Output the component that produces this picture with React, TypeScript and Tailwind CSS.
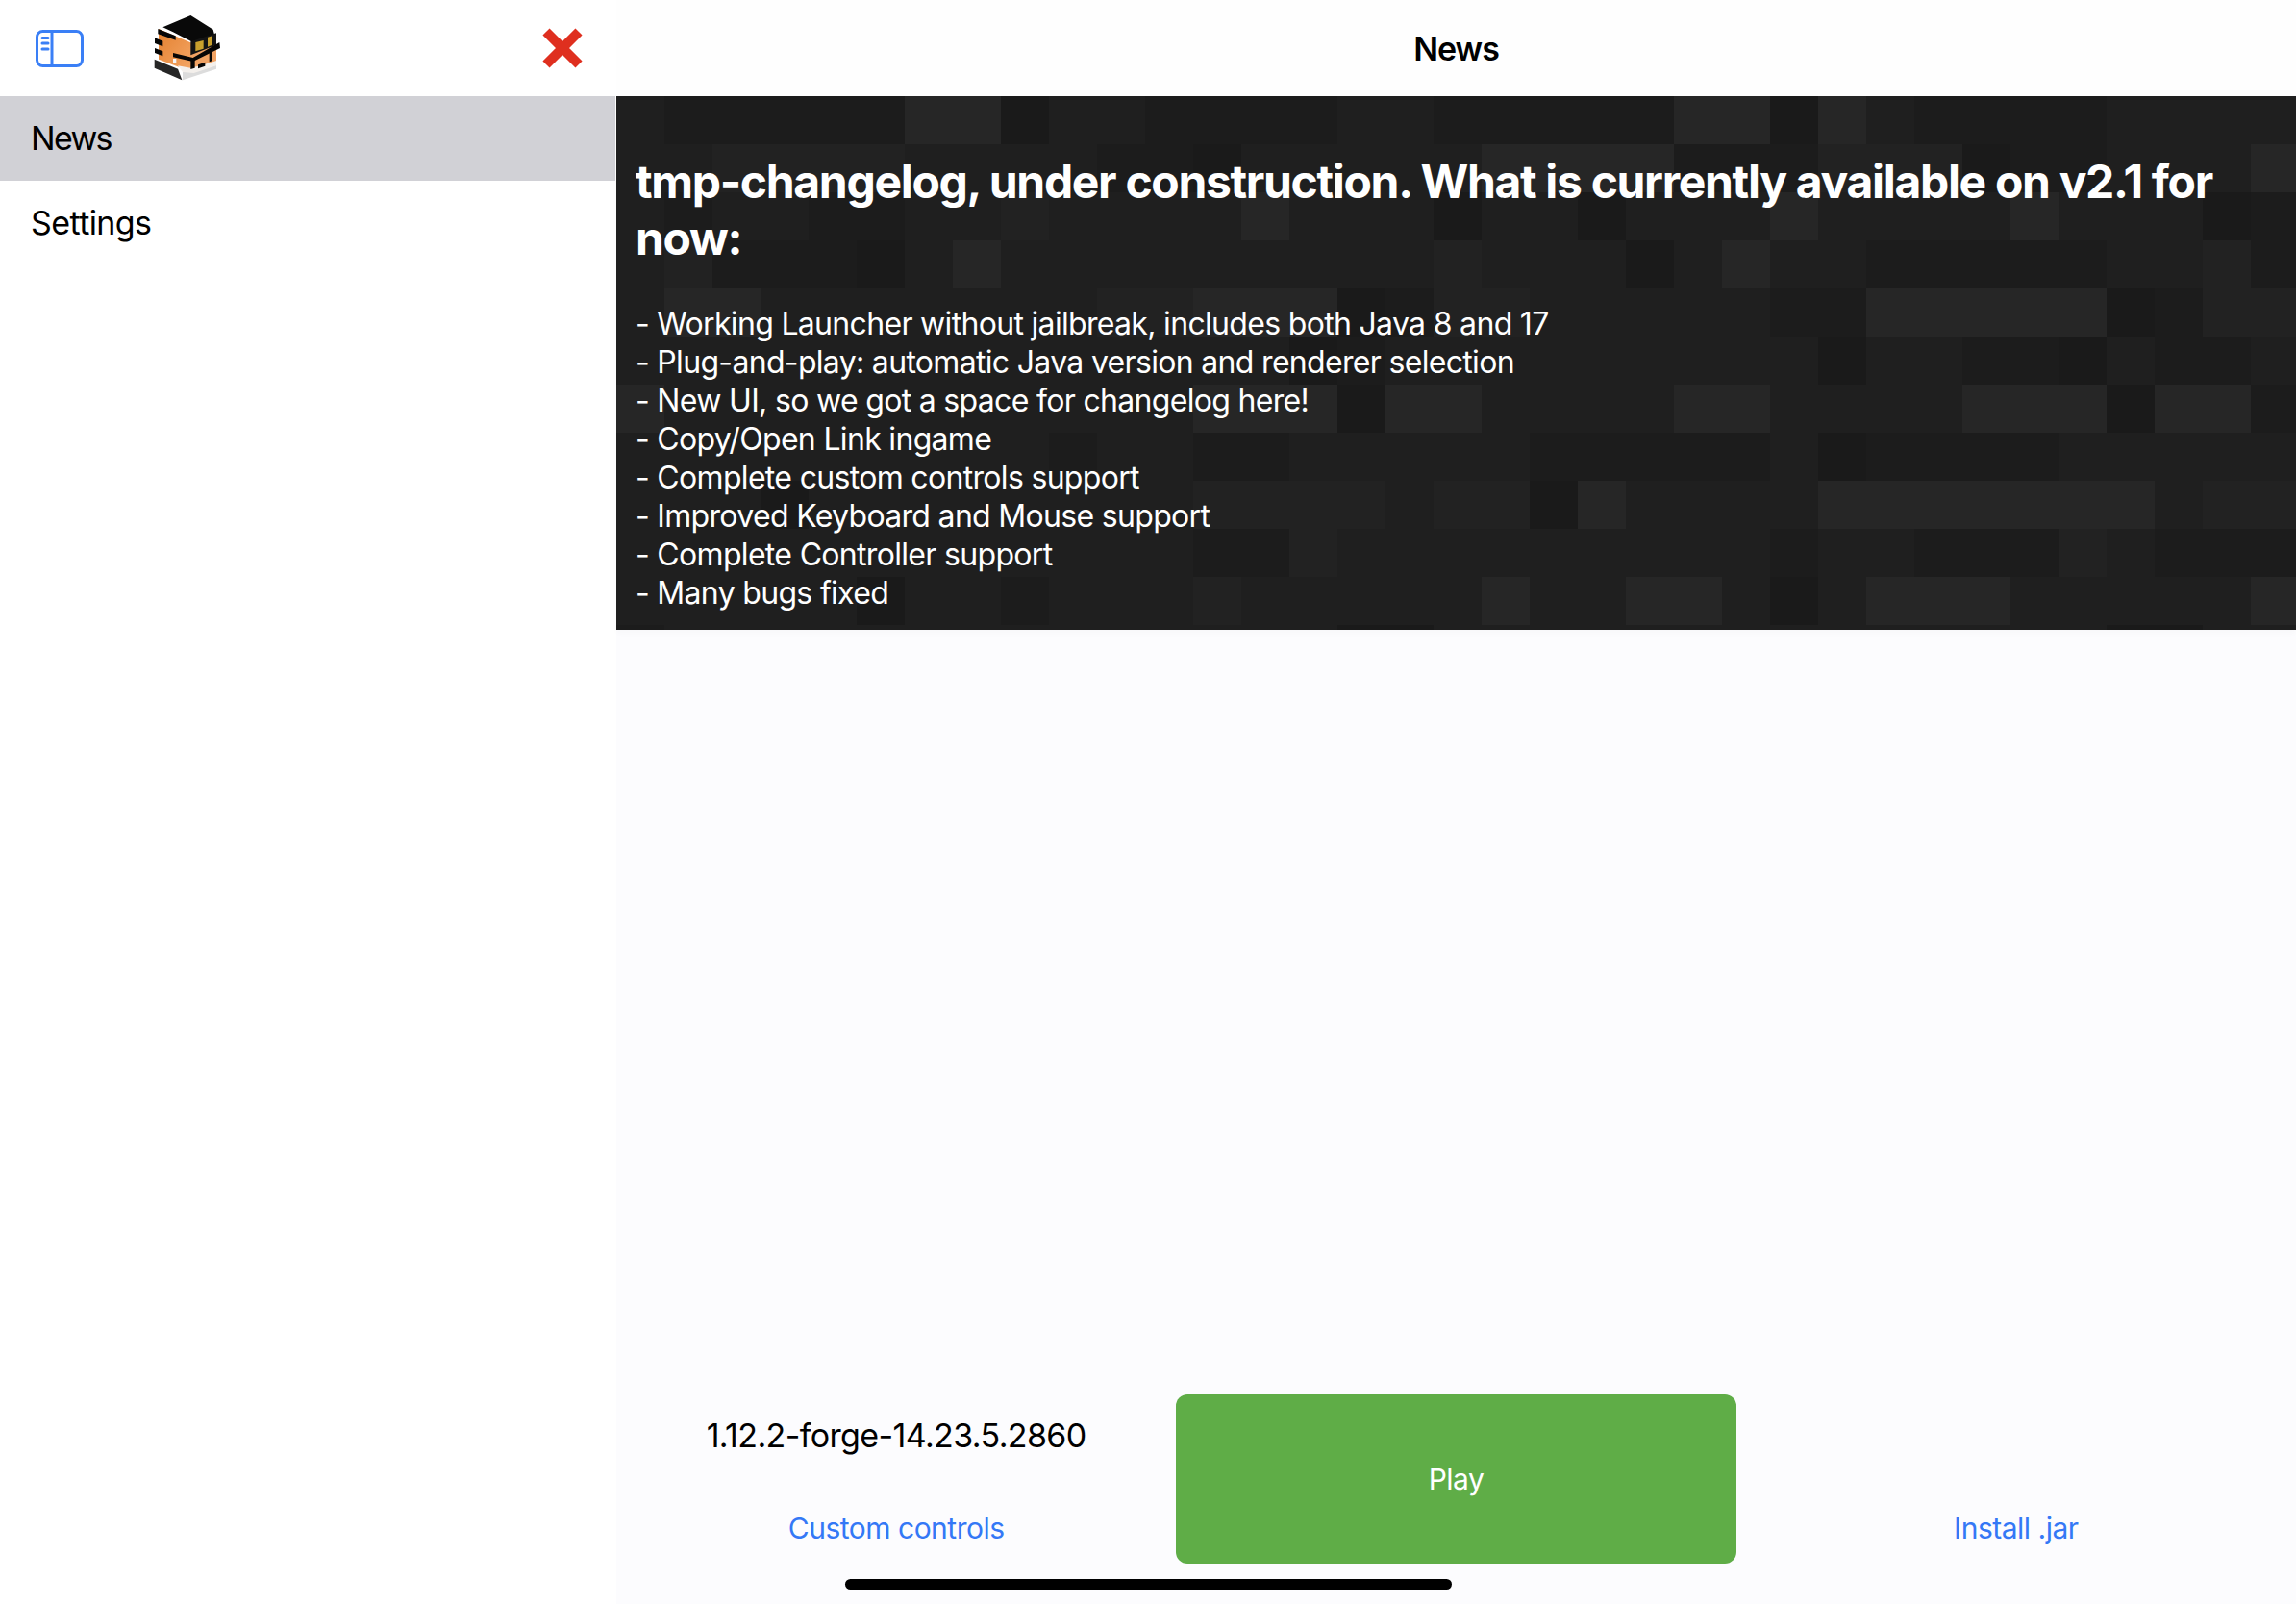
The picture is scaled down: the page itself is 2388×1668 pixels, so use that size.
const texture = [
  'bmmmmmlldbbmmmmbbmmmmmlldlbmmmmbbbb',
  'bbnnnnbbbbmmdbbbbbllllmmmnnndmmbbbl',
  'bmbbmmbbnbbbblbbbdbbdbbblbbbblbbbdm',
  'bnmmmdblbbbbbbbbbnbbbdblbbmmmmmbbnm',
  'bllbbbbbbbnnllldmnnbbbbbmmllllldmnn',
  'bbbbbbbbbbbbbbdmbbbbbbbbbdbbmmdbmmb',
  'lbbbbbbbbbbbllldllbbbbllbbbbllldllm',
  'bbbbbbbbbmbbmmbbbbbmmmmmbdmmmmbbbbb',
  'bbbdbbbbbbbbnnnnbnndlbbbblllllllbnn',
  'bbbbbbbbbbbbmmnbbbbbbbbbmbbmmmnbmmm',
  'bbbbbdbbmbbbnbbbbblbbllbdblllbbbbbl',
  'mbbbbbbbbbbbbbbddbbbbbbbbbbbbbbddbb',
]

const shades: Record<string, string> = {
  d: '#1a1a1a',
  m: '#1c1c1c',
  b: '#1f1f1f',
  n: '#222222',
  l: '#262626',
}

const changes = [
  'Working Launcher without jailbreak, includes both Java 8 and 17',
  'Plug-and-play: automatic Java version and renderer selection',
  'New UI, so we got a space for changelog here!',
  'Copy/Open Link ingame',
  'Complete custom controls support',
  'Improved Keyboard and Mouse support',
  'Complete Controller support',
  'Many bugs fixed',
]

const SidebarIcon = () => (
  <svg width="54" height="43" viewBox="0 0 54 43" fill="none" stroke="#3a7ff6" strokeWidth="3">
    <rect x="3.5" y="3.5" width="47" height="36" rx="6" />
    <path d="M19 3.5v36" />
    <path d="M9 10.5h6M9 16h6M9 22h6" strokeLinecap="round" />
  </svg>
)

const CloseIcon = () => (
  <svg width="42" height="42" viewBox="0 0 42 42" fill="none">
    <path d="M4 4l34 34M38 4L4 38" stroke="#df2f1f" strokeWidth="10" />
  </svg>
)

// little tiger block head from the app logo
const Logo = () => (
  <svg width="120" height="95" viewBox="0 0 360 285">
    <defs>
      <linearGradient id="face" x1="0" y1="0" x2="1" y2="1">
        <stop offset="0" stopColor="#e4802f" />
        <stop offset="1" stopColor="#f4a868" />
      </linearGradient>
    </defs>
    <polygon points="105,90 210,135 210,225 105,185" fill="url(#face)" />
    <polygon points="205,135 285,105 285,205 205,235" fill="#f0a263" />
    <polygon points="180,225 285,190 285,215 180,250" fill="#dcdcdc" />
    <polygon points="165,205 205,212 235,205 285,190 285,205 215,228 180,225" fill="#f4f0ec" />
    <polygon points="118,85 205,48 275,92 285,130 225,150 205,128 150,100" fill="#090909" />
    <polygon points="205,130 285,103 285,140 205,172" fill="#141414" />
    <polygon points="220,132 245,126 245,152 220,160" fill="#c9a02d" />
    <polygon points="258,116 272,112 272,140 258,146" fill="#c9a02d" />
    <polygon points="150,165 212,180 295,132 297,150 212,192 150,178" fill="#060606" />
    <polygon points="205,185 218,182 218,212 205,216" fill="#060606" />
    <polygon points="263,155 272,152 272,190 263,193" fill="#060606" />
    <polygon points="228,202 250,194 250,206 228,214" fill="#060606" />
    <polygon points="103,90 158,112 158,125 103,106" fill="#060606" />
    <polygon points="93,118 118,128 118,145 93,135" fill="#060606" />
    <polygon points="93,150 118,160 118,175 93,165" fill="#060606" />
    <polygon points="92,185 165,215 178,250 92,212" fill="#262626" />
    <rect x="150" y="183" width="10" height="14" fill="#f5f5f5" />
  </svg>
)

export default function App() {
  return (
    <div
      className="flex h-[1668px] w-[2388px] overflow-hidden bg-white text-black"
      style={{ fontFamily: 'Inter, "Noto Sans", sans-serif' }}
    >
      {/* Sidebar */}
      <aside className="w-[641px] shrink-0 bg-white">
        <div className="flex h-[100px] items-center justify-between pl-[35px] pr-[35px]">
          <div className="flex items-center">
            <SidebarIcon />
            <div className="mb-[5px] ml-[41px]">
              <Logo />
            </div>
          </div>
          <CloseIcon />
        </div>
        <nav className="text-[34px]">
          <div className="flex h-[88px] w-[640px] items-center bg-[#d1d1d6] pb-[2px] pl-[32px] tracking-[-1.7px]">News</div>
          <div className="flex h-[88px] items-center pb-[2px] pl-[32px] tracking-[-0.6px]">Settings</div>
        </nav>
      </aside>

      {/* Main */}
      <main className="relative flex min-w-0 flex-1 flex-col bg-[#fcfcfe]">
        <header className="flex h-[100px] shrink-0 items-center justify-center bg-[#fefefe] text-[34px] font-semibold tracking-[-1px]">
          News
        </header>

        <section className="relative h-[555px] shrink-0 overflow-hidden bg-[#1f1f1f] text-white shadow-[0_4px_6px_rgba(0,0,0,0.02)]">
          <svg className="absolute inset-0" width="1750" height="600" shapeRendering="crispEdges">
            {texture.map((row, y) =>
              row.split('').map((c, x) => (
                <rect key={`${x}-${y}`} x={x * 50} y={y * 50} width="50" height="50" fill={shades[c]} />
              ))
            )}
          </svg>
          <div className="relative pl-[20px] pr-[20px] pt-[59px]">
            <h1 className="text-[48px] font-bold leading-[59px] tracking-[-1.32px]">
              tmp-changelog, under construction. What is currently available on v2.1 for now:
            </h1>
            <div className="mt-[40px] text-[32px] leading-[40px] tracking-[-0.68px]">
              {changes.map((line) => (
                <div key={line}>- {line}</div>
              ))}
            </div>
          </div>
        </section>

        <div className="flex-1" />

        {/* Bottom actions */}
        <div className="mb-[42px] grid h-[176px] shrink-0 grid-cols-3">
          <div className="flex flex-col items-center">
            <div className="flex h-[84px] items-center text-[34px] tracking-[-0.62px]">1.12.2-forge-14.23.5.2860</div>
            <button className="mt-[35px] h-[40px] text-[30px] leading-[40px] tracking-[-0.5px] text-[#3478f6]">Custom controls</button>
          </div>
          <button className="rounded-[12px] bg-[#5fad47] text-[30px] tracking-[-0.5px] text-white">Play</button>
          <div className="flex flex-col items-center pt-[119px]">
            <button className="h-[40px] text-[30px] leading-[40px] tracking-[-0.5px] text-[#3478f6]">Install .jar</button>
          </div>
        </div>
      </main>

      {/* Home indicator */}
      <div className="absolute left-[879px] top-[1642px] h-[11px] w-[631px] rounded-full bg-black" />
    </div>
  )
}
